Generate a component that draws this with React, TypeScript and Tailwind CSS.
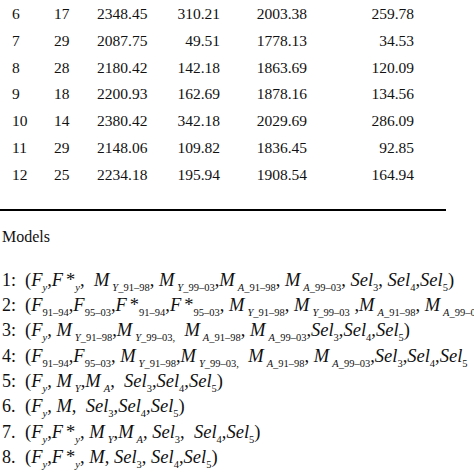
import React from 'react';

const rows = [
  ['6', '17', '2348.45', '310.21', '2003.38', '259.78'],
  ['7', '29', '2087.75', '49.51', '1778.13', '34.53'],
  ['8', '28', '2180.42', '142.18', '1863.69', '120.09'],
  ['9', '18', '2200.93', '162.69', '1878.16', '134.56'],
  ['10', '14', '2380.42', '342.18', '2029.69', '286.09'],
  ['11', '29', '2148.06', '109.82', '1836.45', '92.85'],
  ['12', '25', '2234.18', '195.94', '1908.54', '164.94'],
];

function Sub({ children, gap = false }: { children: React.ReactNode; gap?: boolean }) {
  return (
    <span className={`relative top-[5px] text-[10.5px] leading-none not-italic ${gap ? 'ml-[3px]' : ''}`}>
      {children}
    </span>
  );
}

// F with plain subscript
function F({ s, star = false }: { s: React.ReactNode; star?: boolean }) {
  return (
    <span>
      <i>F</i>
      {star && <span className="ml-[3px]">*</span>}
      <Sub>{s}</Sub>
    </span>
  );
}

// M with "Y_91–98" style subscript
function M({ k, r }: { k?: string; r?: string }) {
  return (
    <span>
      <i>M</i>
      {k && (
        <Sub gap>
          <i>{k}</i>
          {r ? `_${r}` : ''}
        </Sub>
      )}
    </span>
  );
}

function Sel({ n }: { n: number }) {
  return (
    <span>
      <i>Sel</i>
      <Sub>{n}</Sub>
    </span>
  );
}

const y = <i>y</i>;

const models: [string, React.ReactNode][] = [
  [
    '1:',
    <>
      (<F s={y} />,<F s={y} star />,&nbsp; <M k="Y" r="91–98" />, <M k="Y" r="99–03" />,<M k="A" r="91–98" />,{' '}
      <M k="A" r="99–03" />, <Sel n={3} />, <Sel n={4} />,<Sel n={5} />)
    </>,
  ],
  [
    '2:',
    <>
      (<F s="91–94" />,<F s="95–03" />,<F s="91–94" star />,<F s="95–03" star />, <M k="Y" r="91–98" />,{' '}
      <M k="Y" r="99–03" /> ,<M k="A" r="91–98" />, <M k="A" r="99–03" />
    </>,
  ],
  [
    '3:',
    <>
      (<F s={y} />, <M k="Y" r="91–98" />,<M k="Y" r="99–03," />&nbsp; <M k="A" r="91–98" />, <M k="A" r="99–03" />,
      <Sel n={3} />,<Sel n={4} />,<Sel n={5} />)
    </>,
  ],
  [
    '4:',
    <>
      (<F s="91–94" />,<F s="95–03" />, <M k="Y" r="91–98" />,<M k="Y" r="99–03," />&nbsp; <M k="A" r="91–98" />,{' '}
      <M k="A" r="99–03" />,<Sel n={3} />,<Sel n={4} />,<Sel n={5} />
    </>,
  ],
  [
    '5:',
    <>
      (<F s={y} />, <M k="Y" />,<M k="A" />,&nbsp; <Sel n={3} />,<Sel n={4} />,<Sel n={5} />)
    </>,
  ],
  [
    '6.',
    <>
      (<F s={y} />, <M />,&nbsp; <Sel n={3} />,<Sel n={4} />,<Sel n={5} />)
    </>,
  ],
  [
    '7.',
    <>
      (<F s={y} />,<F s={y} star />, <M k="Y" />,<M k="A" />, <Sel n={3} />,&nbsp; <Sel n={4} />,<Sel n={5} />)
    </>,
  ],
  [
    '8.',
    <>
      (<F s={y} />,<F s={y} star />, <M />, <Sel n={3} />, <Sel n={4} />,<Sel n={5} />)
    </>,
  ],
];

export default function App() {
  return (
    <div className="w-[474px] h-[474px] overflow-hidden bg-white text-[#111] font-['Liberation_Serif','Times_New_Roman',serif]">
      <div className="pl-[12px] pt-[1px] grid grid-cols-[42px_43px_50px_73px_87px_107px] text-[15.5px] leading-[26.83px]">
        {rows.map((r) =>
          r.map((c, i) => (
            <div key={r[0] + '-' + i} className={i < 2 ? 'text-left' : 'text-right'}>
              {c}
            </div>
          ))
        )}
      </div>
      <div className="mt-[20px] h-[2px] w-[446px] bg-black" />
      <div className="mt-[16px] pl-[2px] text-[16px] leading-[20px]">Models</div>
      <div className="mt-[21px] text-[18.5px] leading-[25.3px] whitespace-nowrap">
        {models.map(([label, body]) => (
          <div key={label} className="flex h-[25.3px]">
            <span className="w-[25px] shrink-0 pl-[2px] text-[18px]">{label}</span>
            <span>{body}</span>
          </div>
        ))}
      </div>
    </div>
  );
}
